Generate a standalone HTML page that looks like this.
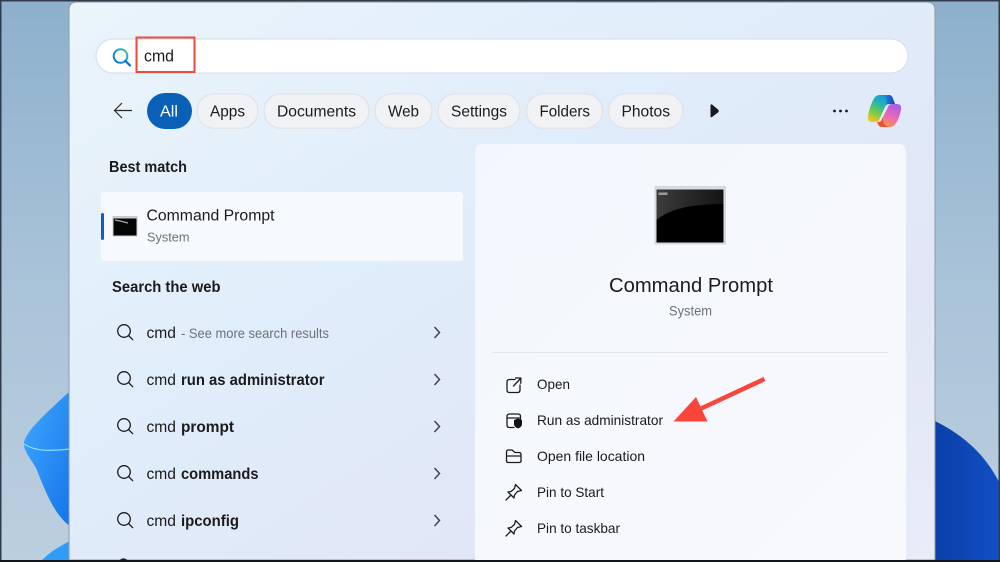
<!DOCTYPE html>
<html lang="en">
<head>
<meta charset="utf-8">
<title>Windows Search - cmd</title>
<style>
html,body{margin:0;padding:0;width:1000px;height:562px;overflow:hidden;background:#000}
svg{display:block;filter:blur(.25px)}
text{font-family:"Liberation Sans",sans-serif;fill:#1b1b1b}
.b{font-weight:bold}
.g{fill:#6d7178}
.chip{fill:#f0f2f5;stroke:#e1e5ea;stroke-width:1.5}
.ic{fill:none;stroke:#1c1c1c;stroke-width:1.3;stroke-linecap:round;stroke-linejoin:round}
</style>
</head>
<body>
<svg width="1000" height="562" viewBox="0 0 1000 562" xmlns="http://www.w3.org/2000/svg">
<defs>
<linearGradient id="wall" x1="0" y1="0" x2="0" y2="1">
<stop offset="0" stop-color="#8db0cc"/><stop offset=".5" stop-color="#a9c3d9"/><stop offset="1" stop-color="#bccfdf"/>
</linearGradient>
<linearGradient id="panel" x1="0" y1="0" x2="1" y2="1">
<stop offset="0" stop-color="#eaf4fb"/><stop offset=".4" stop-color="#e0edfa"/><stop offset=".75" stop-color="#e1e6f6"/><stop offset="1" stop-color="#e8edf8"/>
</linearGradient>
<linearGradient id="bloomL" x1="0" y1="0" x2="1" y2="1">
<stop offset="0" stop-color="#3fa9ff"/><stop offset="1" stop-color="#1574ea"/>
</linearGradient>
<linearGradient id="bloomR" x1="0" y1="0" x2="1" y2="0">
<stop offset="0" stop-color="#0a3fa8"/><stop offset="1" stop-color="#124fc4"/>
</linearGradient>
<linearGradient id="side" x1="0" y1="0" x2="1" y2="1">
<stop offset="0" stop-color="#f3f7fd"/><stop offset="1" stop-color="#f8f9fd"/>
</linearGradient>
<linearGradient id="q" x1="0" y1="1" x2="1" y2="0">
<stop offset="0" stop-color="#0a6fd0"/><stop offset=".6" stop-color="#1b9fd8"/><stop offset="1" stop-color="#49c98a"/>
</linearGradient>
<linearGradient id="cpL" x1=".7" y1="0" x2=".2" y2="1">
<stop offset="0" stop-color="#1c8fe6"/><stop offset=".35" stop-color="#22b4b0"/><stop offset=".65" stop-color="#6cc850"/><stop offset="1" stop-color="#f2c81e"/>
</linearGradient>
<linearGradient id="cpR" x1=".7" y1="0" x2=".3" y2="1">
<stop offset="0" stop-color="#a85ee6"/><stop offset=".5" stop-color="#e868b8"/><stop offset="1" stop-color="#fb9440"/>
</linearGradient>
<linearGradient id="cpT" x1="0" y1="0" x2="1" y2="0">
<stop offset="0" stop-color="#1a8ce0"/><stop offset="1" stop-color="#1640bc"/>
</linearGradient>
<linearGradient id="con" x1="0" y1="0" x2="1" y2="0">
<stop offset="0" stop-color="#3c3c3c"/><stop offset="1" stop-color="#141414"/>
</linearGradient>
</defs>

<!-- wallpaper -->
<rect width="1000" height="562" fill="url(#wall)"/>
<path d="M70 391 C50 410 28 428 24 442 C23 450 30 458 36 468 C45 490 54 515 70 526Z" fill="url(#bloomL)"/>
<path d="M24 444 C36 452 52 451 70 449" fill="none" stroke="#8fdcff" stroke-width="1.2"/>
<path d="M70 541 C60 546 50 552 42 560 H70Z" fill="#2f9df8"/>
<path d="M935 421 C965 436 985 455 999 482 V562 H935Z" fill="url(#bloomR)"/>

<!-- screenshot edges -->
<rect x="0" y="0" width="1000" height="1.5" fill="#2f3d4a"/>
<rect x="0" y="0" width="1.5" height="562" fill="#2f3d4a"/>
<rect x="998.500" y="0" width="1.5" height="562" fill="#2f3d4a"/>

<!-- start panel -->
<path d="M77 2 H927 Q935 2 935 10 V560 H69 V10 Q69 2 77 2Z" fill="url(#panel)" stroke="#8f9aa5" stroke-width="1"/>
<rect x="0" y="560" width="1000" height="2" fill="#10151a"/>

<!-- search box -->
<rect x="96" y="39" width="812" height="34" rx="17" fill="#fff" stroke="#d6e1ea" stroke-width="1.2"/>
<circle cx="120.500" cy="56" r="6.800" fill="none" stroke="url(#q)" stroke-width="2"/>
<path d="M125.500 61 L130 65.500" stroke="#0a6fd0" stroke-width="2.200" stroke-linecap="round"/>
<text x="144" y="61.500" font-size="16.500" textLength="30" lengthAdjust="spacingAndGlyphs" fill="#222">cmd</text>
<rect x="136.500" y="37.500" width="58" height="34.500" fill="none" stroke="#f2483d" stroke-width="2"/>

<!-- filter row -->
<path d="M132 110.500 H115 M122 103 L114.500 110.500 L122 118" fill="none" stroke="#2a2a2a" stroke-width="1.200"/>
<rect x="147" y="93" width="45" height="36" rx="18" fill="#0a60b6"/>
<text x="160" y="116.500" font-size="16" textLength="18" lengthAdjust="spacingAndGlyphs" style="fill:#fff">All</text>
<rect class="chip" x="197" y="93.700" width="61" height="34.500" rx="17"/>
<text x="210" y="116.500" font-size="16" textLength="35" lengthAdjust="spacingAndGlyphs">Apps</text>
<rect class="chip" x="264" y="93.700" width="105" height="34.500" rx="17"/>
<text x="277" y="116.500" font-size="16" textLength="79" lengthAdjust="spacingAndGlyphs">Documents</text>
<rect class="chip" x="375" y="93.700" width="57" height="34.500" rx="17"/>
<text x="388" y="116.500" font-size="16" textLength="31" lengthAdjust="spacingAndGlyphs">Web</text>
<rect class="chip" x="438" y="93.700" width="82" height="34.500" rx="17"/>
<text x="451" y="116.500" font-size="16" textLength="56" lengthAdjust="spacingAndGlyphs">Settings</text>
<rect class="chip" x="526.500" y="93.700" width="76" height="34.500" rx="17"/>
<text x="539.500" y="116.500" font-size="16" textLength="50.500" lengthAdjust="spacingAndGlyphs">Folders</text>
<rect class="chip" x="608.500" y="93.700" width="74.500" height="34.500" rx="17"/>
<text x="621.500" y="116.500" font-size="16" textLength="48.500" lengthAdjust="spacingAndGlyphs">Photos</text>
<path d="M710.500 105 Q710.500 104 712 104.500 L718 109.500 Q719.500 111 718 112.500 L712 117 Q710.500 117.800 710.500 116.500Z" fill="#1a1a1a"/>
<circle cx="834.500" cy="111" r="1.400" fill="#1a1a1a"/><circle cx="840.500" cy="111" r="1.400" fill="#1a1a1a"/><circle cx="846.500" cy="111" r="1.400" fill="#1a1a1a"/>

<!-- copilot -->
<path d="M892 104 H897 Q902 104 901 110 Q899 119 896 123 Q894 127 890 127 H882 Q879 127 878 124 L877 122 H879 Q881 122 882 119 L888 107 Q889 104 892 104Z" fill="url(#cpR)"/>
<path d="M884 127 H882 Q879 127 878 124 L877 122 H879 Q881 122 882 119 L883 117 Q882 124 888 127Z" fill="#ee5230"/>
<path d="M875 97 Q877 95 880 95 H889 Q892 95 893 99 L895 104 H889 Q886 104 885 107 L879 120 Q878 122 875 122 H872 Q867 122 868 116 Q870 104 875 97Z" fill="url(#cpL)"/>
<path d="M884 95 H889 Q892 95 893 99 L895 104 H889 Q887 104 886 105 Q888 99 884 95Z" fill="url(#cpT)"/>

<!-- right pane -->
<path d="M483 144 H898 Q906 144 906 152 V560 H475 V152 Q475 144 483 144Z" fill="url(#side)"/>

<!-- big icon -->
<rect x="655" y="186.500" width="70.500" height="57.500" fill="#d9dde3" stroke="#c5cad2" stroke-width=".6"/>
<rect x="656.500" y="189.500" width="67" height="53" fill="#000"/>
<path d="M656.500 189.500 H723.500 V204 C695 204 670 208 656.500 220Z" fill="url(#con)"/>
<rect x="658.500" y="192.500" width="9" height="2.500" fill="#9a9a9a"/>

<text x="609" y="292" font-size="20.500" textLength="164" lengthAdjust="spacingAndGlyphs">Command Prompt</text>
<text x="669" y="315.500" font-size="14" textLength="43" lengthAdjust="spacingAndGlyphs" class="g">System</text>
<rect x="492" y="352" width="396" height="1" fill="#e4e6ea"/>

<!-- actions -->
<path class="ic" d="M515 379.500 H509.500 Q507 379.500 507 382 V390 Q507 392.500 509.500 392.500 H517.500 Q520 392.500 520 390 V385 M513.500 386 L520.500 378.500 M515.500 378 H520.800 V383.300"/>
<text x="537" y="389" font-size="14" textLength="33" lengthAdjust="spacingAndGlyphs">Open</text>

<path class="ic" d="M514 427.500 H509.500 Q507 427.500 507 425 V416.500 Q507 414 509.500 414 H518 Q520.500 414 520.500 416.500 V419 M507 418 H520.500"/>
<path d="M514 420 L518 418.500 L522 420 V424 Q522 427 518 428.500 Q514 427 514 424Z" fill="#111"/>
<text x="537" y="425" font-size="14" textLength="126" lengthAdjust="spacingAndGlyphs">Run as administrator</text>

<path class="ic" d="M506.500 452 Q506.500 450 508.500 450 H512 L515 452.500 H519 Q521 452.500 521 454.500 V461 Q521 462.500 519 462.500 H508.500 Q506.500 462.500 506.500 461Z M506.500 456 H521"/>
<text x="537" y="461" font-size="14" textLength="108" lengthAdjust="spacingAndGlyphs">Open file location</text>

<path class="ic" d="M515.500 484.500 L521.500 490.500 L517.500 491.500 L514.500 495 L514 498 L508 492 L511 491.500 L514.500 488.500Z M510.500 495.500 L506 500"/>
<text x="537" y="497" font-size="14" textLength="67" lengthAdjust="spacingAndGlyphs">Pin to Start</text>

<path class="ic" d="M515.500 520.500 L521.500 526.500 L517.500 527.500 L514.500 531 L514 534 L508 528 L511 527.500 L514.500 524.500Z M510.500 531.500 L506 536"/>
<text x="537" y="533" font-size="14" textLength="83" lengthAdjust="spacingAndGlyphs">Pin to taskbar</text>

<!-- red arrow -->
<path d="M764.500 379 L700 409" stroke="#f9463a" stroke-width="4.500" fill="none"/>
<path d="M696 397 L673.500 421.500 L707.500 421.500Z" fill="#f9463a"/>

<!-- best match -->
<text x="109" y="172" font-size="15.500" textLength="78" lengthAdjust="spacingAndGlyphs" class="b">Best match</text>
<rect x="101" y="192" width="362" height="69" rx="3" fill="#f6fafe"/>
<rect x="101" y="213" width="3" height="27" rx="1.500" fill="#0a60c0"/>
<rect x="112.500" y="216" width="25" height="20.500" fill="#c9ccd0"/>
<rect x="113.500" y="218.500" width="23" height="17" fill="#050505"/>
<path d="M115 220 L120 221 M120 221 L128 223" stroke="#aaa" stroke-width="1.200" fill="none"/>
<text x="146.500" y="220.500" font-size="15.500" textLength="128" lengthAdjust="spacingAndGlyphs">Command Prompt</text>
<text x="147" y="241.500" font-size="13" textLength="42.500" lengthAdjust="spacingAndGlyphs" class="g">System</text>

<!-- search the web -->
<text x="112" y="292" font-size="15.500" textLength="108.500" lengthAdjust="spacingAndGlyphs" class="b">Search the web</text>

<g id="rows">
<circle class="ic" cx="124" cy="331" r="6.300"/><path class="ic" d="M128.500 335.500 L132.700 339.700"/>
<text x="146.500" y="338" font-size="15.500" textLength="29.500" lengthAdjust="spacingAndGlyphs">cmd</text>
<text x="181" y="338" font-size="14" textLength="148" lengthAdjust="spacingAndGlyphs" class="g">- See more search results</text>
<path d="M434.500 327 L439.500 332.500 L434.500 338" fill="none" stroke="#444" stroke-width="1.500"/>

<circle class="ic" cx="124" cy="378" r="6.300"/><path class="ic" d="M128.500 382.500 L132.700 386.700"/>
<text x="146.500" y="385" font-size="15.500" textLength="29.500" lengthAdjust="spacingAndGlyphs">cmd</text>
<text x="181" y="385" font-size="15.500" textLength="143.500" lengthAdjust="spacingAndGlyphs" class="b">run as administrator</text>
<path d="M434.500 374 L439.500 379.500 L434.500 385" fill="none" stroke="#444" stroke-width="1.500"/>

<circle class="ic" cx="124" cy="425" r="6.300"/><path class="ic" d="M128.500 429.500 L132.700 433.700"/>
<text x="146.500" y="432" font-size="15.500" textLength="29.500" lengthAdjust="spacingAndGlyphs">cmd</text>
<text x="181" y="432" font-size="15.500" textLength="53" lengthAdjust="spacingAndGlyphs" class="b">prompt</text>
<path d="M434.500 421 L439.500 426.500 L434.500 432" fill="none" stroke="#444" stroke-width="1.500"/>

<circle class="ic" cx="124" cy="472" r="6.300"/><path class="ic" d="M128.500 476.500 L132.700 480.700"/>
<text x="146.500" y="479" font-size="15.500" textLength="29.500" lengthAdjust="spacingAndGlyphs">cmd</text>
<text x="181" y="479" font-size="15.500" textLength="77.500" lengthAdjust="spacingAndGlyphs" class="b">commands</text>
<path d="M434.500 468 L439.500 473.500 L434.500 479" fill="none" stroke="#444" stroke-width="1.500"/>

<circle class="ic" cx="124" cy="519" r="6.300"/><path class="ic" d="M128.500 523.500 L132.700 527.700"/>
<text x="146.500" y="526" font-size="15.500" textLength="29.500" lengthAdjust="spacingAndGlyphs">cmd</text>
<text x="181" y="526" font-size="15.500" textLength="58" lengthAdjust="spacingAndGlyphs" class="b">ipconfig</text>
<path d="M434.500 515 L439.500 520.500 L434.500 526" fill="none" stroke="#444" stroke-width="1.500"/>

<path d="M119.500 560 Q123.500 556.500 127.500 560Z" fill="#222"/>
</g>
</svg>
</body>
</html>
